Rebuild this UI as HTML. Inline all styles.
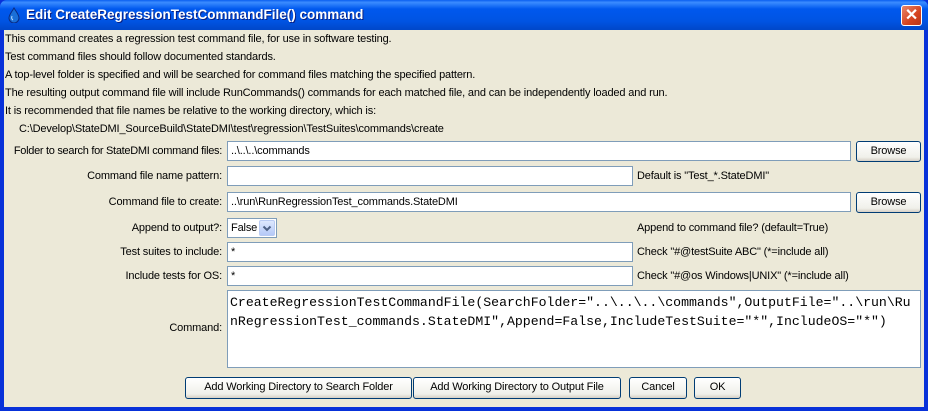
<!DOCTYPE html>
<html><head><style>
*{margin:0;padding:0;box-sizing:border-box}
body{width:928px;height:411px;overflow:hidden;background:#0831d9;font-family:"Liberation Sans",sans-serif;font-size:11px;letter-spacing:-0.15px;color:#000;position:relative}
.title{position:absolute;left:0;top:0;width:928px;height:30px;background:linear-gradient(#0a5ff0 0%,#3b8cff 8%,#0058ee 30%,#0054e3 70%,#0047c8 100%);border-radius:7px 7px 0 0}
.title span{position:absolute;left:26px;top:7px;color:#fff;font-weight:bold;font-size:13.5px;letter-spacing:0;text-shadow:1px 1px #0a1f80}
.client{position:absolute;left:4px;top:30px;width:920px;height:377px;background:#ece9d8}
.a{position:absolute;white-space:nowrap}
.r{position:absolute;text-align:right;white-space:nowrap;right:706px}
.f{position:absolute;background:#fff;border:1px solid #7f9db9;padding:0 3px;line-height:18px;white-space:nowrap}
.b{position:absolute;border:1px solid #003c74;border-radius:3px;background:linear-gradient(#fff,#f0f0ea 80%,#d6d0c5);text-align:center;line-height:19px}
</style></head><body>
<div class="title">
<svg style="position:absolute;left:7px;top:7px" width="14" height="16"><path d="M7 1 C4 6 2 8 2 11 a5 5 0 0 0 10 0 C12 8 10 6 7 1z" fill="#1a6fd8" stroke="#0a2a80"/><path d="M5 9 q-1 3 1 4" stroke="#bfe0ff" fill="none"/></svg>
<span>Edit CreateRegressionTestCommandFile() command</span>
<div style="position:absolute;left:901px;top:5px;width:21px;height:21px;border:1px solid #fff;border-radius:3px;background:linear-gradient(135deg,#e8866a,#d5431f 60%,#b8361a);color:#fff;font-weight:bold;font-size:16px;text-align:center;line-height:19px">✕</div>
</div>
<div class="client"></div>
<div class="a" style="left:5px;top:33px">This command creates a regression test command file, for use in software testing.</div>
<div class="a" style="left:5px;top:51px">Test command files should follow documented standards.</div>
<div class="a" style="left:5px;top:69px">A top-level folder is specified and will be searched for command files matching the specified pattern.</div>
<div class="a" style="left:5px;top:87px">The resulting output command file will include RunCommands() commands for each matched file, and can be independently loaded and run.</div>
<div class="a" style="left:5px;top:105px">It is recommended that file names be relative to the working directory, which is:</div>
<div class="a" style="left:19px;top:123px">C:\Develop\StateDMI_SourceBuild\StateDMI\test\regression\TestSuites\commands\create</div>

<div class="r" style="top:145px;letter-spacing:-0.3px">Folder to search for StateDMI command files:</div>
<div class="f" style="left:227px;top:141px;width:624px;height:20px">..\..\..\commands</div>
<div class="b" style="left:856px;top:141px;width:65px;height:21px">Browse</div>

<div class="r" style="top:170px">Command file name pattern:</div>
<div class="f" style="left:227px;top:166px;width:406px;height:20px"></div>
<div class="a" style="left:637px;top:170px">Default is "Test_*.StateDMI"</div>

<div class="r" style="top:196px">Command file to create:</div>
<div class="f" style="left:227px;top:192px;width:624px;height:20px">..\run\RunRegressionTest_commands.StateDMI</div>
<div class="b" style="left:856px;top:192px;width:65px;height:21px">Browse</div>

<div class="r" style="top:222px">Append to output?:</div>
<div class="f" style="left:227px;top:218px;width:50px;height:20px">False</div>
<div style="position:absolute;left:259px;top:220px;width:16px;height:16px;border-radius:2px;background:linear-gradient(#dde8fe,#b5c9f7);border:1px solid #b9cbf3"><svg width="14" height="14"><path d="M3.5 5.5 L7 9 L10.5 5.5" stroke="#4d6185" stroke-width="2" fill="none"/></svg></div>
<div class="a" style="left:637px;top:222px">Append to command file? (default=True)</div>

<div class="r" style="top:246px">Test suites to include:</div>
<div class="f" style="left:227px;top:242px;width:406px;height:20px">*</div>
<div class="a" style="left:637px;top:246px">Check "#@testSuite ABC" (*=include all)</div>

<div class="r" style="top:270px">Include tests for OS:</div>
<div class="f" style="left:227px;top:266px;width:406px;height:20px">*</div>
<div class="a" style="left:637px;top:270px">Check "#@os Windows|UNIX" (*=include all)</div>

<div class="r" style="top:322px">Command:</div>
<div class="f" style="left:227px;top:290px;width:694px;height:78px;font-family:'Liberation Mono',monospace;font-size:13.2px;letter-spacing:0;line-height:19px;padding:2px 2px;white-space:pre">CreateRegressionTestCommandFile(SearchFolder="..\..\..\commands",OutputFile="..\run\Ru
nRegressionTest_commands.StateDMI",Append=False,IncludeTestSuite="*",IncludeOS="*")</div>

<div class="b" style="left:185px;top:377px;width:227px;height:22px">Add Working Directory to Search Folder</div>
<div class="b" style="left:413px;top:377px;width:208px;height:22px">Add Working Directory to Output File</div>
<div class="b" style="left:629px;top:377px;width:58px;height:22px">Cancel</div>
<div class="b" style="left:694px;top:377px;width:47px;height:22px">OK</div>
</body></html>
